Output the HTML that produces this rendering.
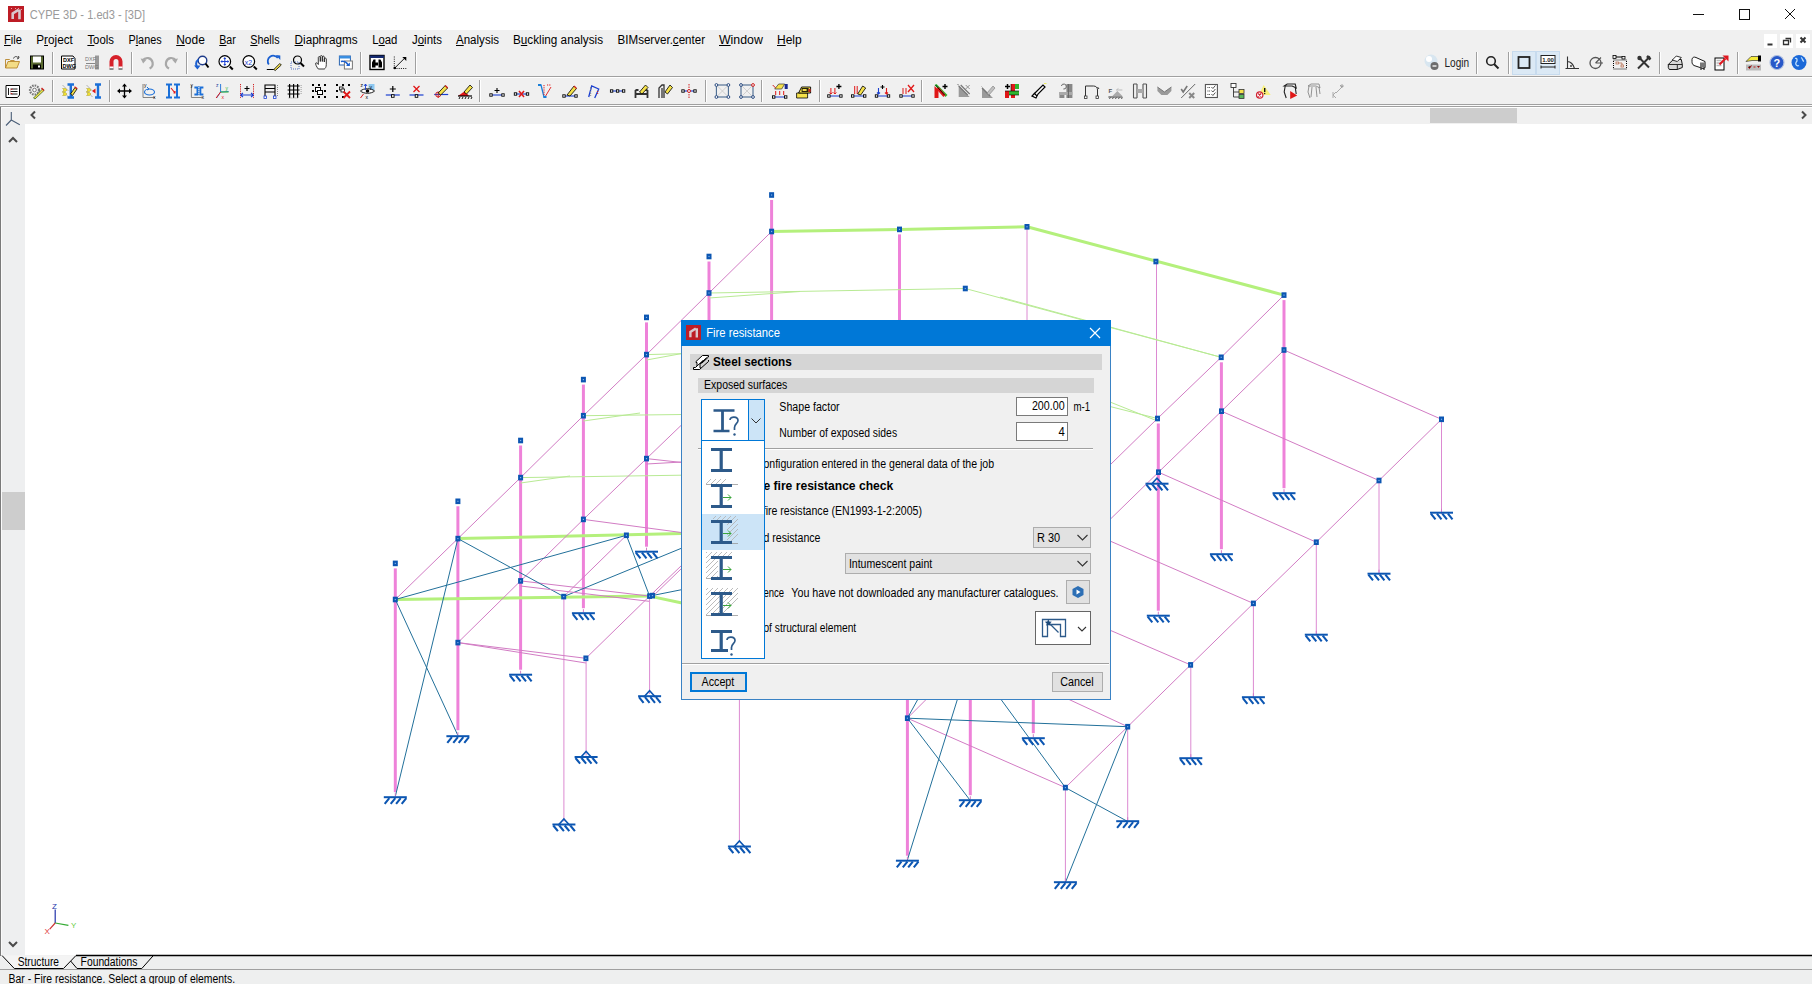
<!DOCTYPE html>
<html><head><meta charset="utf-8"><style>
*{margin:0;padding:0;box-sizing:border-box}
body{width:1812px;height:984px;overflow:hidden;background:#f0f0f0;position:relative;font-family:"Liberation Sans",sans-serif;font-size:12px;color:#000}
.a{position:absolute}
</style></head><body>
<div class="a" style="left:0;top:0;width:1812px;height:30px;background:#fff"></div>
<svg class="a" style="left:8px;top:6px" width="16" height="16"><rect width="16" height="16" fill="#bd1c25"/><path d="M4.7 13V7.5L10.5 3.8M11.5 3.5V13.3" stroke="#d9c6cc" stroke-width="2.6" fill="none"/><path d="M3 2.5h1M7 2.5h1M10 2.5h1M13 3.5h1" stroke="#e8a0a8" stroke-width="1"/></svg>
<svg class="a" style="left:1690px;top:0" width="122" height="30"><path d="M3 14.5H14" stroke="#111" stroke-width="1"/><rect x="49.5" y="9.5" width="10" height="10" stroke="#111" fill="none"/><path d="M95 9L105 19M105 9L95 19" stroke="#111" stroke-width="1"/></svg>
<div class="a" style="left:1764px;top:34px;width:13px;height:14px;background:#fff"></div>
<div class="a" style="left:1780px;top:34px;width:13px;height:14px;background:#fff"></div>
<div class="a" style="left:1796px;top:34px;width:14px;height:14px;background:#fff"></div>
<svg class="a" style="left:1763px;top:33px" width="49" height="15"><path d="M4.5 11.5H9.5" stroke="#333" stroke-width="2"/><path d="M20.5 7.5h5v4h-5zM22.5 5.5h5v4" stroke="#333" fill="none" stroke-width="1.3"/><path d="M37.5 4.5L42.5 9.5M42.5 4.5L37.5 9.5" stroke="#333" stroke-width="2"/></svg>
<div class="a" style="left:0;top:76px;width:1812px;height:1px;background:#a0a0a0"></div>
<div class="a" style="left:0;top:77px;width:1812px;height:1px;background:#fff"></div>
<div class="a" style="left:0;top:104px;width:1812px;height:1px;background:#a0a0a0"></div>
<div class="a" style="left:0;top:105px;width:1812px;height:1px;background:#fbfbfb"></div>
<div class="a" style="left:0;top:106px;width:1812px;height:1px;background:#a0a0a0"></div>
<div class="a" style="left:0;top:107px;width:1812px;height:1px;background:#fff"></div>
<svg class="a" style="left:0;top:0" width="1812" height="106" font-family="Liberation Sans"><rect x="1512.5" y="51.5" width="23" height="23" fill="#dbe9f5" stroke="#c7dbee"/><rect x="1536.5" y="51.5" width="23" height="23" fill="#dbe9f5" stroke="#c7dbee"/><circle cx="1431" cy="61" r="6.5" fill="#d8e6f0"/><circle cx="1429" cy="59" r="3" fill="#fff"/><circle cx="1434.5" cy="66" r="4" fill="#6d6d6d"/><path d="M1432.5 66H1436.5" stroke="#fff" stroke-width="1.3"/><rect x="52" y="52" width="1" height="22" fill="#a0a0a0"/><rect x="53" y="52" width="1" height="22" fill="#fff"/><rect x="131" y="52" width="1" height="22" fill="#a0a0a0"/><rect x="132" y="52" width="1" height="22" fill="#fff"/><rect x="186" y="52" width="1" height="22" fill="#a0a0a0"/><rect x="187" y="52" width="1" height="22" fill="#fff"/><rect x="360" y="52" width="1" height="22" fill="#a0a0a0"/><rect x="361" y="52" width="1" height="22" fill="#fff"/><rect x="415" y="52" width="1" height="22" fill="#a0a0a0"/><rect x="416" y="52" width="1" height="22" fill="#fff"/><rect x="1476" y="52" width="1" height="22" fill="#a0a0a0"/><rect x="1477" y="52" width="1" height="22" fill="#fff"/><rect x="1508" y="52" width="1" height="22" fill="#a0a0a0"/><rect x="1509" y="52" width="1" height="22" fill="#fff"/><rect x="1659" y="52" width="1" height="22" fill="#a0a0a0"/><rect x="1660" y="52" width="1" height="22" fill="#fff"/><rect x="1737" y="52" width="1" height="22" fill="#a0a0a0"/><rect x="1738" y="52" width="1" height="22" fill="#fff"/><rect x="52" y="80" width="1" height="22" fill="#a0a0a0"/><rect x="53" y="80" width="1" height="22" fill="#fff"/><rect x="109" y="80" width="1" height="22" fill="#a0a0a0"/><rect x="110" y="80" width="1" height="22" fill="#fff"/><rect x="479" y="80" width="1" height="22" fill="#a0a0a0"/><rect x="480" y="80" width="1" height="22" fill="#fff"/><rect x="705" y="80" width="1" height="22" fill="#a0a0a0"/><rect x="706" y="80" width="1" height="22" fill="#fff"/><rect x="761" y="80" width="1" height="22" fill="#a0a0a0"/><rect x="762" y="80" width="1" height="22" fill="#fff"/><rect x="819" y="80" width="1" height="22" fill="#a0a0a0"/><rect x="820" y="80" width="1" height="22" fill="#fff"/><rect x="921" y="80" width="1" height="22" fill="#a0a0a0"/><rect x="922" y="80" width="1" height="22" fill="#fff"/><g transform="translate(4.5,54.5)"><path d="M1 13.5L3.5 7H15L12.5 13.5Z" fill="#f3dc86" stroke="#b8862a" stroke-width="0.9"/><path d="M1 13.5V5H5L6 6H10" fill="none" stroke="#b8862a" stroke-width="0.9"/><path d="M9 4C10 1.5 12 1.5 14 3.5M12.5 4.5L14.5 3.5L14 1.5" stroke="#333" stroke-width="0.9" fill="none"/></g><g transform="translate(29,54.5)"><rect x="1.5" y="1.5" width="13" height="13" fill="#5b6b32" stroke="#000"/><rect x="4" y="2" width="8" height="6" fill="#fff"/><rect x="4" y="10" width="8" height="4.5" fill="#000"/><rect x="9" y="11" width="2" height="2" fill="#fff"/></g><g transform="translate(60,54.5)"><path d="M1.5 1.5H13L15 4V14.5H1.5Z" fill="#fff" stroke="#000"/><text x="3" y="7" font-size="5.5" font-weight="bold" font-family="Liberation Sans">DXF</text><text x="2.5" y="13" font-size="5.5" font-weight="bold" font-family="Liberation Sans">DWG</text></g><g transform="translate(84,54.5)"><rect x="11" y="1" width="4" height="14" fill="#999"/><text x="1" y="6.5" font-size="5.5" fill="#777" font-family="Liberation Sans">DXF</text><text x="1" y="14" font-size="5.5" fill="#777" font-family="Liberation Sans">DWG</text><path d="M2 9H11" stroke="#888"/></g><g transform="translate(108,54.5)"><path d="M3.5 14V7A4.5 4.5 0 0 1 12.5 7V14" stroke="#d6212a" stroke-width="4" fill="none"/><rect x="1.5" y="12" width="4" height="2.5" fill="#fff"/><rect x="10.5" y="12" width="4" height="2.5" fill="#fff"/><path d="M1.5 14.5H5.5M10.5 14.5H14.5" stroke="#222"/></g><g transform="translate(139.6,54.5)"><path d="M3 6C6 2 12 3 13 8C13.5 11 12 13 10 14" stroke="#a8a8a8" stroke-width="2.2" fill="none"/><path d="M1 4L3.5 9L7 5Z" fill="#a8a8a8"/></g><g transform="translate(163,54.5)"><path d="M13 6C10 2 4 3 3 8C2.5 11 4 13 6 14" stroke="#a8a8a8" stroke-width="2.2" fill="none"/><path d="M15 4L12.5 9L9 5Z" fill="#a8a8a8"/></g><g transform="translate(193.5,54.5)"><circle cx="9" cy="6" r="4.3" stroke="#1e3b8a" stroke-width="1.4" fill="#fff"/><path d="M12 9L15 13" stroke="#000" stroke-width="2"/><path d="M5 5C2 7 2 11 4 13" stroke="#1a5fd0" stroke-width="2" fill="none"/><path d="M0.5 11H7L4 15Z" fill="#1a5fd0"/></g><g transform="translate(217.8,54.5)"><circle cx="7" cy="7" r="5.8" stroke="#000" stroke-width="1.2" fill="#fff"/><path d="M12 12L15 15" stroke="#000" stroke-width="2"/><path d="M7 2.5L5.5 4.5H8.5ZM7 11.5L5.5 9.5H8.5ZM2.5 7L4.5 5.5V8.5ZM11.5 7L9.5 5.5V8.5Z" fill="#1a3fd0"/><path d="M7 4V10M4 7H10" stroke="#1a3fd0"/></g><g transform="translate(241.8,54.5)"><circle cx="7" cy="7" r="5.8" stroke="#000" stroke-width="1.2" fill="#fff"/><path d="M12 12L15 15" stroke="#000" stroke-width="2"/><text x="3" y="10" font-size="7" fill="#1a3fd0" font-family="Liberation Sans">x2</text></g><g transform="translate(265.8,54.5)"><path d="M3 10A5.5 5.5 0 1 1 12 3.5" stroke="#1a5fd0" stroke-width="1.8" fill="none"/><path d="M10 0.5L14.5 1V5.5Z" fill="#1a5fd0"/><path d="M8 15L14 9L15.5 10.5L9.5 16Z" fill="#f5e14a" stroke="#000" stroke-width="0.8"/><path d="M1 15H8" stroke="#000"/></g><g transform="translate(289.5,54.5)"><rect x="1.5" y="7.5" width="8" height="7" stroke="#5470c8" stroke-dasharray="1 1" fill="none"/><circle cx="8" cy="5.5" r="4" stroke="#000" stroke-width="1.2" fill="none"/><path d="M11 8.5L14.5 12" stroke="#000" stroke-width="2"/></g><g transform="translate(313.8,54.5)"><path d="M4.5 14.5C2.5 12 1.5 9.5 2 8.5C2.8 7.8 4 9 4.5 10V3C4.5 1.8 6.5 1.8 6.5 3V7V2C6.5 0.8 8.5 0.8 8.5 2V7V2.5C8.5 1.3 10.5 1.3 10.5 2.5V7.5V4.5C10.5 3.3 12.5 3.3 12.5 4.5V10C12.5 12.5 11.5 14 10.5 14.5Z" fill="#fff" stroke="#222" stroke-width="0.9"/></g><g transform="translate(337.9,54.5)"><rect x="1.5" y="1.5" width="11" height="9" fill="#fff" stroke="#2a64b0"/><rect x="1.5" y="1.5" width="11" height="2.5" fill="#3a8ee0"/><rect x="6.5" y="6.5" width="8" height="8" fill="#fff" stroke="#777"/><path d="M3 7C6 6 9 8 10.5 11" stroke="#1a5fd0" stroke-width="1.6" fill="none"/><path d="M8 11.5H12V8Z" fill="#1a5fd0"/></g><g transform="translate(369,54.5)"><rect x="1" y="1" width="14" height="14" fill="#fff" stroke="#000" stroke-width="1.4"/><rect x="1" y="1" width="14" height="2.5" fill="#152a70"/><path d="M3 13V8L4.5 5H6.5V13ZM13 13V8L11.5 5H9.5V13ZM6 8H10V11H6Z" fill="#000"/></g><g transform="translate(392.3,54.5)"><path d="M2 14H14M2 14V2" stroke="#000" stroke-width="0.9" stroke-dasharray="1 1.2"/><path d="M2 14L13 3" stroke="#000" stroke-width="0.9"/><path d="M10 2.5H14V6.5Z" fill="#000"/><circle cx="2.5" cy="13.5" r="1.3" fill="#000"/></g><g transform="translate(1484.5,54.5)"><circle cx="6.5" cy="6.5" r="4.3" stroke="#222" stroke-width="1.6" fill="none"/><path d="M9.5 9.5L14 14" stroke="#222" stroke-width="2"/></g><g transform="translate(1516,54.5)"><rect x="2.5" y="2.5" width="11" height="11" stroke="#222" stroke-width="1.8" fill="none"/></g><g transform="translate(1540,54.5)"><rect x="1" y="1" width="14" height="8" stroke="#222" stroke-width="1" fill="#fff"/><text x="2.2" y="7.6" font-size="6.2" font-weight="bold" font-family="Liberation Sans" fill="#222" textLength="11.6" lengthAdjust="spacingAndGlyphs">1.00</text><path d="M1 12.5H15M1 11V14M15 11V14" stroke="#222"/></g><g transform="translate(1564.5,54.5)"><path d="M1 14H14.5M3 2V14M3 7C6 7 9 10 10 14" stroke="#333" stroke-width="1.1" fill="none"/><circle cx="6.5" cy="11.5" r="0.9" fill="#333"/></g><g transform="translate(1588,54.5)"><circle cx="7.5" cy="8.5" r="5.5" stroke="#555" stroke-width="1.3" fill="none"/><path d="M7.5 8.5L13 3M7.5 8.5H15" stroke="#555" stroke-width="1.1"/></g><g transform="translate(1612,54.5)"><rect x="1.5" y="5.5" width="13" height="9" stroke="#000" stroke-dasharray="1 1" fill="none"/><rect x="1" y="1" width="3" height="3" stroke="#000" stroke-width="0.8" fill="none"/><rect x="10" y="2" width="3" height="2.5" stroke="#000" stroke-width="0.8" fill="none"/><path d="M4 2.5H10" stroke="#000"/><rect x="4" y="7.5" width="2.5" height="2" stroke="#b06040" stroke-width="0.7" fill="none"/><rect x="9" y="10.5" width="2.5" height="2" stroke="#b06040" stroke-width="0.7" fill="none"/><path d="M6.5 8.5H10V10.5" stroke="#b06040" stroke-width="0.7" fill="none"/></g><g transform="translate(1636,54.5)"><path d="M2 14L14 2M3 3L13 13" stroke="#333" stroke-width="2"/><circle cx="3.5" cy="3.5" r="2.2" fill="#333"/><path d="M11 1.5L14.5 5" stroke="#333" stroke-width="2.5"/></g><g transform="translate(1667.3,54.5)"><path d="M1 10L6 5H14L15 10V13L10 15H2L1 13Z" fill="#d8d8d8" stroke="#000" stroke-width="0.9"/><path d="M5 5.5L9 1.5L14 3L10 7Z" fill="#fff" stroke="#000" stroke-width="0.8"/><path d="M1 10H10L15 10M10 10V15" stroke="#000" stroke-width="0.8" fill="none"/></g><g transform="translate(1691,54.5)"><path d="M1 5C1 3 3 2 5 3L14 7V13L12 14L3 11C1.5 10 1 9 1 7Z" fill="#fff" stroke="#000" stroke-width="0.9"/><rect x="9" y="8" width="6" height="5" fill="#777"/><path d="M10 13V15.5M13 13V15.5" stroke="#000"/></g><g transform="translate(1713.5,54.5)"><rect x="1.5" y="3.5" width="9" height="12" fill="#fff" stroke="#000"/><path d="M3 6H8M3 8.5H8M3 11H8" stroke="#bbb" stroke-width="1.4"/><path d="M6 10L12 4" stroke="#e01820" stroke-width="2.2"/><path d="M9 1H15V7Z" fill="#e01820"/></g><g transform="translate(1745,54.5)"><rect x="1" y="10" width="15" height="6" fill="#bbb"/><path d="M3 12.5L4.5 14L6.5 11M8.5 12.5H10.5M12.5 11.5L13.5 13L14.5 11.5" stroke="#c02020" stroke-width="1"/><path d="M1 7L6 2H14V6H7Z" fill="#f5ea3a" stroke="#333" stroke-width="0.7"/><rect x="13" y="1" width="3" height="6" fill="#000"/></g><g transform="translate(1769,54.5)"><circle cx="8" cy="8" r="7" fill="#2858c8" stroke="#b0c0e0" stroke-width="1.2"/><text x="4.5" y="12.5" font-size="11" font-weight="bold" fill="#fff" font-family="Liberation Sans">?</text></g><g transform="translate(1791,54.5)"><circle cx="8" cy="8" r="7.5" fill="#1a68d8"/><path d="M4 4C6 3 7 6 5 8C4 10 6 12 8 11M10 3C12 4 11 6 13 7" stroke="#bfe0ff" stroke-width="1.3" fill="none"/></g><g transform="translate(4.5,83)"><path d="M1.5 2.5H15V12L13 14.5H1.5Z" fill="#fff" stroke="#000"/><path d="M4 5V12M6 6H13M6 8.5H13M6 11H13" stroke="#000" stroke-width="0.9"/><path d="M6 7L8 6M6 10L8 11" stroke="#d02020" stroke-width="0.9"/></g><g transform="translate(28.5,83)"><circle cx="6" cy="7" r="4.5" fill="none" stroke="#777" stroke-width="2.2" stroke-dasharray="1.6 1"/><circle cx="6" cy="7" r="1.8" fill="#fff" stroke="#777"/><path d="M5 15L14 6L15.5 7.5L6.5 16Z" fill="#f5e14a" stroke="#3a6a2a" stroke-width="0.8"/><path d="M13 5L15.5 7.5" stroke="#d02020" stroke-width="1.4"/></g><g transform="translate(61.5,83)"><path d="M1 2L7 8M1 8L7 14" stroke="#999" stroke-width="0.7"/><path d="M1 5.5H4L5.5 7L4 8.5H1L2.5 7Z" fill="#f0e030" stroke="#b0a020" stroke-width="0.5"/><path d="M1 9.5H4L5.5 11L4 12.5H1L2.5 11Z" fill="#f0e030" stroke="#b0a020" stroke-width="0.5"/><path d="M6 1.5H12.5M6 14.5H12.5M9.3 1.5V14.5" stroke="#1a6fd8" stroke-width="2.4"/><path d="M9 11L13.5 4.5L15.5 6L11 12.5Z" fill="#f5e14a" stroke="#000" stroke-width="0.8"/><path d="M13 3.8L15.8 5.8" stroke="#d02020" stroke-width="1.4"/></g><g transform="translate(85.5,83)"><path d="M1 2L7 8M1 8L7 14" stroke="#999" stroke-width="0.7"/><path d="M1 5.5H4L5.5 7L4 8.5H1L2.5 7Z" fill="#f0e030" stroke="#b0a020" stroke-width="0.5"/><path d="M1 9.5H4L5.5 11L4 12.5H1L2.5 11Z" fill="#f0e030" stroke="#b0a020" stroke-width="0.5"/><path d="M6.5 8L10 5.5V10.5Z" fill="#e01818"/><path d="M9.5 1.5H15.5M9.5 14.5H15.5M12.5 1.5V14.5" stroke="#1a6fd8" stroke-width="2.4"/></g><g transform="translate(116.5,83)"><path d="M8 2V14M2 8H14" stroke="#000" stroke-width="1.3"/><path d="M8 0.5L5.5 3.5H10.5ZM8 15.5L5.5 12.5H10.5ZM0.5 8L3.5 5.5V10.5ZM15.5 8L12.5 5.5V10.5Z" fill="#000"/></g><g transform="translate(141,83)"><path d="M2 1V14.5H14" stroke="#777" stroke-width="0.9" fill="none"/><ellipse cx="8.5" cy="9" rx="5" ry="3" stroke="#1a6fd8" stroke-width="1.1" fill="none"/><path d="M6 4L8 6L6 7" fill="none" stroke="#1a6fd8"/><text x="12" y="16" font-size="5" font-family="Liberation Sans">x</text><text x="3" y="4" font-size="5" font-family="Liberation Sans">y</text></g><g transform="translate(165,83)"><path d="M1 1.5H7M1 14.5H7M4 1.5V14.5M9 1.5H15M9 14.5H15M12 1.5V14.5" stroke="#1a6fd8" stroke-width="2"/><path d="M6 5L10 10M8.5 10H10V8" stroke="#e01818" stroke-width="1.1" fill="none"/></g><g transform="translate(189.4,83)"><path d="M2 2V14.5H13" stroke="#777" stroke-width="0.9" fill="none"/><path d="M5 4.5H8V11.5H5M14 4.5H11V11.5H14" stroke="#1a6fd8" stroke-width="1.8" fill="none"/><path d="M9.5 3V13" stroke="#1a6fd8" stroke-dasharray="1 1"/><text x="12" y="16" font-size="5" font-family="Liberation Sans">x</text><text x="1" y="4" font-size="5" font-family="Liberation Sans">y</text></g><g transform="translate(214.6,83)"><path d="M6 9V1M6 9L14 8.5M6 9L2 15" stroke="#1a6fd8" stroke-width="0.9"/><path d="M6 9H14" stroke="#2fb52f" stroke-width="1"/><path d="M6 9L1.5 15" stroke="#e01818" stroke-width="1"/><text x="1.5" y="4" font-size="5" fill="#1a3fa0" font-family="Liberation Sans">z</text><text x="11" y="7" font-size="5" fill="#2fb52f" font-family="Liberation Sans">y</text><text x="7" y="16" font-size="5" fill="#e01818" font-family="Liberation Sans">x</text></g><g transform="translate(239,83)"><path d="M1.5 1V15M14.5 1V15" stroke="#d02020" stroke-dasharray="1.2 1"/><path d="M1.5 12H14.5M1.5 12L4 10M1.5 12L4 14M14.5 12L12 10M14.5 12L12 14" stroke="#1a3fd0" stroke-width="1.1"/><path d="M8 3V8M5.5 5.5H10.5" stroke="#000" stroke-width="1.1"/></g><g transform="translate(263,83)"><path d="M2 14V2H12V14M2 5.5H12M2 9H12" stroke="#000" stroke-width="1.1" fill="none"/><rect x="1" y="13" width="2.5" height="2.5" fill="#fff" stroke="#1a3fd0" stroke-width="0.8"/><rect x="10.5" y="13" width="2.5" height="2.5" fill="#fff" stroke="#1a3fd0" stroke-width="0.8"/><path d="M14.5 2V13" stroke="#888" stroke-dasharray="1 1"/></g><g transform="translate(286.6,83)"><path d="M3 1V15M7 1V15M11 1V15M1 3H13M1 7H13M1 11H13" stroke="#000" stroke-width="1.2"/><path d="M14.5 2V12M2 15H12" stroke="#999" stroke-dasharray="1 1"/></g><g transform="translate(311,83)"><path d="M1 1h2v2h-2zM7 1h2v2h-2zM13 1h2v2h-2zM1 7h2v2h-2zM13 7h2v2h-2zM1 13h2v2h-2zM7 13h2v2h-2zM13 13h2v2h-2z" fill="#000"/><rect x="4.5" y="4.5" width="5" height="4" fill="#fff" stroke="#000"/><rect x="6.5" y="7.5" width="5" height="4" fill="#fff" stroke="#000"/></g><g transform="translate(335,83)"><path d="M1 1h2v2h-2zM7 1h2v2h-2zM13 1h2v2h-2zM1 7h2v2h-2zM1 13h2v2h-2zM7 13h2v2h-2z" fill="#000"/><rect x="4.5" y="4" width="3.5" height="3" fill="#fff" stroke="#000" stroke-width="0.8"/><rect x="6" y="6" width="3.5" height="3" fill="#fff" stroke="#000" stroke-width="0.8"/><path d="M8.5 8.5L15 15M15 8.5L8.5 15" stroke="#e01818" stroke-width="1.8"/></g><g transform="translate(359.5,83)"><rect x="9" y="1" width="6" height="6" fill="#8ec8f0"/><path d="M1 8C4 5 12 5 15 8C12 11 4 11 1 8Z" fill="#fff" stroke="#000" stroke-width="0.9"/><circle cx="8" cy="8" r="1.8" fill="#000"/><path d="M6 7V1M6 1L4.5 3M6 1L7.5 3" stroke="#1a3fd0" stroke-width="0.9" fill="none"/><path d="M4 11L1 15" stroke="#e01818"/><text x="10" y="6" font-size="5" font-family="Liberation Sans">y</text><text x="1" y="4" font-size="5" font-family="Liberation Sans">z</text><text x="6" y="16" font-size="5" font-family="Liberation Sans">x</text></g><g transform="translate(384.8,83)"><path d="M1 12H15" stroke="#1a3fd0" stroke-width="1.2"/><rect x="6.7" y="11.7" width="2.6" height="2.6" fill="#fff" stroke="#000" stroke-width="0.9"/><path d="M8 3V9M5 6H11" stroke="#000" stroke-width="1.2"/></g><g transform="translate(408.5,83)"><path d="M1 12H15" stroke="#1a3fd0" stroke-width="1.2"/><rect x="6.7" y="11.7" width="2.6" height="2.6" fill="#fff" stroke="#000" stroke-width="0.9"/><path d="M5 3L11 9M11 3L5 9" stroke="#e01818" stroke-width="1.3"/></g><g transform="translate(433.2,83)"><path d="M1 11.5H15" stroke="#1a3fd0" stroke-width="1.2"/><circle cx="5" cy="11.5" r="2.5" fill="none" stroke="#d02020"/><path d="M5 9V15" stroke="#d02020"/><path d="M5 10L12 2.5L14.5 5L7.5 12Z" fill="#f5e14a" stroke="#000" stroke-width="0.8"/><path d="M12 2.5L14.5 5" stroke="#d02020" stroke-width="1.2"/></g><g transform="translate(457,83)"><path d="M1 13L8 8L12 13Z" fill="#e01818"/><path d="M1 13H15" stroke="#000" stroke-width="1.2"/><path d="M2 16L3 14M5 16L6 14M8 16L9 14M11 16L12 14M14 16L15 14" stroke="#000" stroke-width="0.9"/><path d="M7 9L13 2L15.5 4.5L9.5 11Z" fill="#f5e14a" stroke="#000" stroke-width="0.8"/></g><g transform="translate(489,83)"><path d="M2 12H14" stroke="#1a3fd0" stroke-width="1.1"/><rect x="0.8" y="10.8" width="2.4" height="2.4" fill="#fff" stroke="#000" stroke-width="0.9"/><rect x="12.8" y="10.8" width="2.4" height="2.4" fill="#fff" stroke="#000" stroke-width="0.9"/><path d="M8 5V10M5.5 7.5H10.5" stroke="#000" stroke-width="1.1"/></g><g transform="translate(513.5,83)"><path d="M2 11H14" stroke="#1a3fd0" stroke-width="1.1"/><rect x="0.8" y="9.8" width="2.4" height="2.4" fill="#fff" stroke="#000" stroke-width="0.9"/><rect x="12.8" y="9.8" width="2.4" height="2.4" fill="#fff" stroke="#000" stroke-width="0.9"/><path d="M5.5 8L10.5 14M10.5 8L5.5 14" stroke="#e01818" stroke-width="1.5"/></g><g transform="translate(537,83)"><path d="M2 2H4L7 14H9" stroke="#1a7fd8" stroke-width="1.3" fill="none"/><path d="M8 14L14 4" stroke="#e01818" stroke-width="0.9"/><path d="M7 2V12M10 2H14" stroke="#e01818" stroke-dasharray="1.2 1"/><rect x="1" y="1" width="3" height="2" fill="#1a7fd8"/><rect x="6.5" y="13" width="3" height="2" fill="#1a7fd8"/></g><g transform="translate(562,83)"><path d="M2 13H14" stroke="#1a3fd0" stroke-width="1.1"/><rect x="0.8" y="11.8" width="2.4" height="2.4" fill="#fff" stroke="#000" stroke-width="0.9"/><rect x="12.8" y="11.8" width="2.4" height="2.4" fill="#fff" stroke="#000" stroke-width="0.9"/><path d="M5 12L12 3L14.5 5.5L8 13Z" fill="#f5e14a" stroke="#000" stroke-width="0.8"/><path d="M12 3L14.5 5.5" stroke="#d02020" stroke-width="1.2"/></g><g transform="translate(585.7,83)"><path d="M3 14L6 3L13 6L9 15" stroke="#1a3fd0" stroke-width="1.3" fill="none"/><path d="M5 4V14" stroke="#888" stroke-dasharray="1 1"/><path d="M12 8V12" stroke="#e01818" stroke-dasharray="1 1"/></g><g transform="translate(609.6,83)"><path d="M2 8H14" stroke="#1a3fd0" stroke-width="1.1"/><rect x="0.8" y="6.8" width="2.4" height="2.4" fill="#fff" stroke="#000" stroke-width="0.9"/><rect x="6.8" y="6.8" width="2.4" height="2.4" fill="#fff" stroke="#000" stroke-width="0.9"/><rect x="12.8" y="6.8" width="2.4" height="2.4" fill="#fff" stroke="#000" stroke-width="0.9"/></g><g transform="translate(633.5,83)"><path d="M2 15V7M14 15V7M2 11H14M2 7H5M11 7H14" stroke="#333" stroke-width="1.8" fill="none"/><path d="M6 9L12 2L14.5 4.5L8.5 11Z" fill="#f5e14a" stroke="#000" stroke-width="0.8"/></g><g transform="translate(657,83)"><path d="M2 15V5L5 2H7V15M5 15V5" stroke="#333" stroke-width="1.3" fill="none"/><path d="M8 9L13 2L15.5 4.5L10.5 11Z" fill="#f5e14a" stroke="#000" stroke-width="0.8"/></g><g transform="translate(681,83)"><path d="M1 8H15" stroke="#1a3fd0" stroke-width="1.1"/><rect x="0.8" y="6.8" width="2.4" height="2.4" fill="#fff" stroke="#000" stroke-width="0.9"/><rect x="12.8" y="6.8" width="2.4" height="2.4" fill="#fff" stroke="#000" stroke-width="0.9"/><path d="M8 1V15" stroke="#d02020" stroke-dasharray="1.5 1"/><circle cx="8" cy="8" r="1.5" fill="#fff" stroke="#d02020"/></g><g transform="translate(714.4,83)"><rect x="2" y="2" width="12" height="12" fill="none" stroke="#4a6a90" stroke-width="1.1"/><path d="M2 2L14 14M14 2L2 14" stroke="#c8c8c8" stroke-width="0.8"/><circle cx="2" cy="2" r="1.4" fill="#fff" stroke="#2a4a80"/><circle cx="14" cy="2" r="1.4" fill="#fff" stroke="#2a4a80"/><circle cx="2" cy="14" r="1.4" fill="#fff" stroke="#2a4a80"/><circle cx="14" cy="14" r="1.4" fill="#fff" stroke="#2a4a80"/></g><g transform="translate(739,83)"><rect x="2" y="2" width="12" height="12" fill="none" stroke="#4a6a90" stroke-width="1.1"/><path d="M2 2L14 14M14 2L2 14" stroke="#c8c8c8" stroke-width="0.8"/><circle cx="2" cy="2" r="1.4" fill="#fff" stroke="#2a4a80"/><circle cx="14" cy="2" r="1.4" fill="#fff" stroke="#d02020"/><circle cx="2" cy="14" r="1.4" fill="#fff" stroke="#2a4a80"/><circle cx="14" cy="14" r="1.4" fill="#fff" stroke="#2a4a80"/></g><g transform="translate(771.7,83)"><path d="M2 14H14" stroke="#1a3fd0"/><rect x="0.8" y="12.8" width="2.4" height="2.4" fill="#fff" stroke="#000" stroke-width="0.9"/><rect x="12.8" y="12.8" width="2.4" height="2.4" fill="#fff" stroke="#000" stroke-width="0.9"/><path d="M4 8V12M8 8V12M12 8V12" stroke="#e01818" stroke-width="1"/><path d="M3 6L7 1H13L10 6Z" fill="#f5e14a" stroke="#333" stroke-width="0.7"/><rect x="13" y="1" width="3" height="5" fill="#1a2a90"/><path d="M1 2L4 5" stroke="#d02020"/></g><g transform="translate(795.6,83)"><path d="M1 10H12V15H1Z" fill="#f5e14a" stroke="#000" stroke-width="0.8"/><path d="M3 10L6 4H15V10H6Z" fill="#f5e14a" stroke="#000" stroke-width="0.9"/><rect x="6" y="5" width="7" height="4" fill="#000" opacity="0.85"/><rect x="7" y="6" width="4" height="2" fill="#f5e14a"/><rect x="13" y="6" width="2" height="3" fill="#d02020"/></g><g transform="translate(826.9,83)"><path d="M2 13H14" stroke="#1a3fd0"/><rect x="0.8" y="11.8" width="2.4" height="2.4" fill="#fff" stroke="#000" stroke-width="0.9"/><rect x="12.8" y="11.8" width="2.4" height="2.4" fill="#fff" stroke="#000" stroke-width="0.9"/><path d="M4 5V11M8 5V11" stroke="#e01818" stroke-width="1"/><path d="M2.5 9.5L4 11L5.5 9.5M6.5 9.5L8 11L9.5 9.5" stroke="#e01818" fill="none"/><path d="M12 1V6M9.5 3.5H14.5" stroke="#000" stroke-width="1.3"/></g><g transform="translate(850.7,83)"><path d="M2 13H14" stroke="#1a3fd0"/><rect x="0.8" y="11.8" width="2.4" height="2.4" fill="#fff" stroke="#000" stroke-width="0.9"/><rect x="12.8" y="11.8" width="2.4" height="2.4" fill="#fff" stroke="#000" stroke-width="0.9"/><path d="M4 3V11M6.5 3V11" stroke="#e01818" stroke-width="1"/><path d="M7 11L12 3L15 5L10 12Z" fill="#f5e14a" stroke="#000" stroke-width="0.8"/></g><g transform="translate(874.5,83)"><path d="M2 13H14" stroke="#1a3fd0"/><rect x="0.8" y="11.8" width="2.4" height="2.4" fill="#fff" stroke="#000" stroke-width="0.9"/><rect x="12.8" y="11.8" width="2.4" height="2.4" fill="#fff" stroke="#000" stroke-width="0.9"/><path d="M4 5V11M2.5 9.5L4 11L5.5 9.5" stroke="#1a3fd0" fill="none" stroke-width="1.1"/><path d="M12 5V11M10.5 9.5L12 11L13.5 9.5" stroke="#e01818" fill="none" stroke-width="1.1"/><path d="M8 2V6M6 4H10" stroke="#000" stroke-width="1.1"/></g><g transform="translate(899,83)"><path d="M2 13H14" stroke="#1a3fd0"/><rect x="0.8" y="11.8" width="2.4" height="2.4" fill="#fff" stroke="#000" stroke-width="0.9"/><rect x="12.8" y="11.8" width="2.4" height="2.4" fill="#fff" stroke="#000" stroke-width="0.9"/><path d="M4 5V11M7 5V11" stroke="#e01818" stroke-width="1"/><path d="M9 2L15 9M15 2L9 9" stroke="#e01818" stroke-width="1.3"/></g><g transform="translate(932.5,83)"><path d="M2 2L13 14L15 12L4 1Z" fill="#2fb52f"/><path d="M2 3L2 15L6 15L6 7Z" fill="#e01818"/><path d="M5 5L12 13" stroke="#e01818" stroke-width="3"/><path d="M3 2L12 12" stroke="#000" stroke-width="0.8"/><path d="M12.5 1V6M10 3.5H15" stroke="#000" stroke-width="1.4"/></g><g transform="translate(955.7,83)"><path d="M1 1L14 14H3V1Z" fill="#9a9a9a"/><path d="M3 3L12 12M5 2L14 11" stroke="#777" stroke-width="1.2"/><path d="M10 2L14 6M14 2L10 6" stroke="#888" stroke-width="0.9"/></g><g transform="translate(980,83)"><path d="M1 3L13 15H2V3Z" fill="#9a9a9a"/><path d="M2 5L10 13" stroke="#777" stroke-width="1.2"/><path d="M7 10L13 3L15 5L9 12Z" fill="#c0c0c0" stroke="#888" stroke-width="0.7"/></g><g transform="translate(1004,83)"><rect x="1" y="8" width="4" height="7" fill="#e01818"/><rect x="7" y="1" width="4" height="14" fill="#e01818"/><rect x="11" y="1" width="4" height="5" fill="#2fb52f"/><rect x="5" y="8" width="10" height="4" fill="#2fb52f"/><path d="M1 8H15M7 1V8M5 12H15" stroke="#000" stroke-width="0.6"/><path d="M3.5 1V6M1 3.5H6" stroke="#000" stroke-width="1.5"/></g><g transform="translate(1031,83)"><path d="M2 12L5 9L12 2L14 4L7 11L5 15L1 13Z" fill="#fff" stroke="#000" stroke-width="1.2"/><path d="M3 10L6 13" stroke="#000" stroke-width="1.3"/><path d="M13 0.5L15.5 0.5" stroke="#ecec60"/></g><g transform="translate(1058.4,83)"><rect x="1" y="9" width="5" height="6" fill="#888"/><rect x="8" y="1" width="6" height="14" fill="#888"/><rect x="1" y="9" width="13" height="3" fill="#aaa"/><path d="M3 3A2.5 2.5 0 1 1 5 6" stroke="#666" fill="none"/><path d="M10 1V15" stroke="#666"/></g><g transform="translate(1083.5,83)"><path d="M2 14V3H10C12.5 3 14 4.5 14 7V14" stroke="#333" stroke-width="1" fill="none"/><rect x="1" y="13" width="2.5" height="2.5" fill="#fff" stroke="#333" stroke-width="0.8"/><rect x="12.5" y="13" width="2.5" height="2.5" fill="#fff" stroke="#333" stroke-width="0.8"/><path d="M14 4L15.5 6" stroke="#333"/></g><g transform="translate(1107.4,83)"><path d="M5 13L10 8L15 13Z" fill="#aaa"/><path d="M1 14H15" stroke="#333"/><path d="M2 16L3 14.5M5 16L6 14.5M8 16L9 14.5M11 16L12 14.5M14 16L15 14.5" stroke="#333" stroke-width="0.8"/><text x="1" y="10" font-size="6" font-weight="bold" fill="#555" font-family="Liberation Sans">F</text><path d="M9 7H15M9 7L11 5.5" stroke="#bbb"/></g><g transform="translate(1132,83)"><path d="M1.5 1V15M5 1V15M11 1V15M14.5 1V15M1.5 1H5M1.5 15H5M11 1H14.5M11 15H14.5" stroke="#555" stroke-width="1.1"/><rect x="5" y="6" width="6" height="4" fill="#aaa"/></g><g transform="translate(1156.4,83)"><path d="M1 4L8 9L15 4V8L11 12H5L1 8Z" fill="#9a9a9a"/><path d="M1 4L8 9L15 4" stroke="#777" fill="none"/></g><g transform="translate(1180.2,83)"><path d="M1 15L15 1" stroke="#666"/><path d="M1 6L3 9L7 3" stroke="#777" stroke-width="1.6" fill="none"/><path d="M9 10L14 15M14 10L9 15" stroke="#888" stroke-width="2"/></g><g transform="translate(1203.4,83)"><rect x="2" y="1.5" width="12" height="13" fill="#fff" stroke="#555" stroke-width="1.1"/><path d="M4 4.5H7M4 8H7M4 11.5H7" stroke="#555" stroke-dasharray="1 0.5"/><path d="M8 4L9.5 5.5L12 2.5M8 7.5L9.5 9L12 6M8 11L9.5 12.5L12 9.5" stroke="#555" fill="none"/></g><g transform="translate(1230,83)"><rect x="1" y="0.5" width="5" height="4" fill="#fff" stroke="#333" stroke-width="0.9"/><path d="M3.5 4.5V14H9M3.5 9H9" stroke="#333" fill="none" stroke-width="0.9"/><rect x="9" y="6.5" width="5" height="4" fill="#f5e14a" stroke="#333" stroke-width="0.8"/><rect x="9" y="11.5" width="5" height="4" fill="#5ab85a" stroke="#333" stroke-width="0.8"/></g><g transform="translate(1255.7,83)"><path d="M8 2L15 12H3Z" fill="#f8f07a"/><path d="M9 5V9" stroke="#111" stroke-width="1.4"/><circle cx="9" cy="10.5" r="0.7" fill="#111"/><circle cx="4" cy="12" r="3.2" fill="#fff" stroke="#d02030" stroke-width="1.2"/><path d="M2.5 10.5L5.5 13.5M5.5 10.5L2.5 13.5" stroke="#d02030" stroke-width="1.1"/></g><g transform="translate(1282.2,83)"><path d="M2 3L5 1H13L14 5L10 3H4L2 3ZM3 3L2 9L4 15M13 4L14 11" stroke="#222" stroke-width="1.1" fill="none"/><path d="M8 8L15 12.5L8 16Z" fill="#e01818"/></g><g transform="translate(1306,83)"><path d="M2 3L5 1H13L14 5L10 3H4L2 3ZM3 3L2 9L4 15M13 4L14 11M6 4L5 14M10 4L11 14" stroke="#888" stroke-width="0.9" fill="none"/></g><g transform="translate(1330,83)"><path d="M3 15V9M3 12L6 9M3 12L6 15M6 10L13 3" stroke="#aaa" stroke-width="1"/><path d="M10 2L12 4M12 1V5M14 3H10" stroke="#999" stroke-width="0.8"/></g></svg>
<div class="a" style="left:1430px;top:108px;width:87px;height:15px;background:#cdcdcd"></div>
<svg class="a" style="left:28px;top:110px" width="10" height="10"><path d="M7 1.5L3.5 5L7 8.5" stroke="#4a4a4a" stroke-width="2" fill="none"/></svg>
<svg class="a" style="left:1799px;top:110px" width="10" height="10"><path d="M3 1.5L6.5 5L3 8.5" stroke="#4a4a4a" stroke-width="2" fill="none"/></svg>
<div class="a" style="left:0;top:107px;width:1px;height:849px;background:#7a7a7a"></div>
<div class="a" style="left:1px;top:107px;width:1px;height:849px;background:#fafafa"></div>
<div class="a" style="left:2px;top:124px;width:23px;height:831px;background:#eeeff0"></div>
<div class="a" style="left:2px;top:492px;width:23px;height:38px;background:#cdcdcd"></div>
<svg class="a" style="left:0;top:108px" width="24" height="20"><path d="M11.3 4V12M11.3 12L6 17.5M11.3 12L19.8 16.7" stroke="#4a5e78" stroke-width="1.1" fill="none"/></svg>
<svg class="a" style="left:7px;top:134px" width="12" height="10"><path d="M2 8L6 4L10 8" stroke="#4a4a4a" stroke-width="2" fill="none"/></svg>
<svg class="a" style="left:7px;top:940px" width="12" height="10"><path d="M2 2L6 6L10 2" stroke="#4a4a4a" stroke-width="2" fill="none"/></svg>
<div class="a" style="left:25px;top:124px;width:1787px;height:831px;background:#fff"></div>
<svg class="a" style="left:0;top:0" width="1812" height="984">
<line x1="771.6" y1="200" x2="771.6" y2="320" stroke="#ee82d9" stroke-width="3"/>
<line x1="899.5" y1="234.4" x2="899.5" y2="320" stroke="#ee82d9" stroke-width="3"/>
<line x1="709" y1="261.5" x2="709" y2="320" stroke="#ee82d9" stroke-width="3"/>
<line x1="646.5" y1="322.4" x2="646.5" y2="546.7" stroke="#ee82d9" stroke-width="3"/>
<line x1="583.4" y1="384.6" x2="583.4" y2="608.2" stroke="#ee82d9" stroke-width="3"/>
<line x1="520.6" y1="445.5" x2="520.6" y2="669.7" stroke="#ee82d9" stroke-width="3"/>
<line x1="457.9" y1="506.3" x2="457.9" y2="730.2" stroke="#ee82d9" stroke-width="3"/>
<line x1="395.3" y1="568.4" x2="395.3" y2="792.2" stroke="#ee82d9" stroke-width="3"/>
<line x1="1284" y1="300.1" x2="1284" y2="488.2" stroke="#ee82d9" stroke-width="3"/>
<line x1="1221.4" y1="362.3" x2="1221.4" y2="549.2" stroke="#ee82d9" stroke-width="3"/>
<line x1="1158.3" y1="423.5" x2="1158.3" y2="610.7" stroke="#ee82d9" stroke-width="3"/>
<line x1="907.4" y1="699" x2="907.4" y2="855.7" stroke="#ee82d9" stroke-width="3"/>
<line x1="970.3" y1="699" x2="970.3" y2="795.2" stroke="#ee82d9" stroke-width="3"/>
<line x1="1033.3" y1="699" x2="1033.3" y2="733.2" stroke="#ee82d9" stroke-width="3"/>
<line x1="1027" y1="226.8" x2="1027" y2="320" stroke="#dc8ad2" stroke-width="1"/>
<line x1="1156.5" y1="261.5" x2="1156.5" y2="418.5" stroke="#dc8ad2" stroke-width="1"/>
<line x1="1441.5" y1="419.3" x2="1441.5" y2="514" stroke="#dc8ad2" stroke-width="1"/>
<line x1="1379" y1="480.5" x2="1379" y2="575" stroke="#dc8ad2" stroke-width="1"/>
<line x1="1316.3" y1="542.2" x2="1316.3" y2="636" stroke="#dc8ad2" stroke-width="1"/>
<line x1="1253.4" y1="603.4" x2="1253.4" y2="698.5" stroke="#dc8ad2" stroke-width="1"/>
<line x1="1190.8" y1="664.9" x2="1190.8" y2="759.5" stroke="#dc8ad2" stroke-width="1"/>
<line x1="1127.7" y1="726.7" x2="1127.7" y2="821.5" stroke="#dc8ad2" stroke-width="1"/>
<line x1="1065.4" y1="787.6" x2="1065.4" y2="882.5" stroke="#dc8ad2" stroke-width="1"/>
<line x1="739.4" y1="699" x2="739.4" y2="842" stroke="#dc8ad2" stroke-width="1"/>
<line x1="563.9" y1="596.6" x2="563.9" y2="821.5" stroke="#dc8ad2" stroke-width="1"/>
<line x1="586.1" y1="658.3" x2="586.1" y2="755.5" stroke="#dc8ad2" stroke-width="1"/>
<line x1="649.6" y1="596.1" x2="649.6" y2="694" stroke="#dc8ad2" stroke-width="1"/>
<line x1="771.6" y1="231.5" x2="899.5" y2="229.4" stroke="#b4f07c" stroke-width="3"/>
<line x1="899.5" y1="229.4" x2="1027" y2="226.8" stroke="#b4f07c" stroke-width="3"/>
<line x1="1027" y1="226.8" x2="1284" y2="295.1" stroke="#b4f07c" stroke-width="3"/>
<line x1="395.3" y1="599.5" x2="649.6" y2="596.1" stroke="#b4f07c" stroke-width="3"/>
<line x1="649.6" y1="596.1" x2="682" y2="603" stroke="#b4f07c" stroke-width="3"/>
<line x1="457.9" y1="538.6" x2="682" y2="533.5" stroke="#b4f07c" stroke-width="3"/>
<line x1="709" y1="293" x2="965.3" y2="288.5" stroke="#b8ea94" stroke-width="1"/>
<line x1="709" y1="298" x2="800" y2="291.5" stroke="#b8ea94" stroke-width="1"/>
<line x1="965.3" y1="288.5" x2="1221.2" y2="357.3" stroke="#b8ea94" stroke-width="1"/>
<line x1="1000" y1="297" x2="1221.2" y2="357.3" stroke="#b8ea94" stroke-width="1"/>
<line x1="1110" y1="406.5" x2="1157.5" y2="418.5" stroke="#b8ea94" stroke-width="1"/>
<line x1="1110" y1="402" x2="1157.5" y2="421" stroke="#b8ea94" stroke-width="1"/>
<line x1="646.5" y1="354.6" x2="682" y2="353.7" stroke="#b8ea94" stroke-width="1"/>
<line x1="646.5" y1="360" x2="682" y2="353.5" stroke="#b8ea94" stroke-width="1"/>
<line x1="583.4" y1="415.7" x2="682" y2="414.5" stroke="#b8ea94" stroke-width="1"/>
<line x1="583.4" y1="421" x2="640" y2="413" stroke="#b8ea94" stroke-width="1"/>
<line x1="520.6" y1="477.6" x2="682" y2="475.2" stroke="#b8ea94" stroke-width="1"/>
<line x1="520.6" y1="483" x2="570" y2="476" stroke="#b8ea94" stroke-width="1"/>
<line x1="395.3" y1="599.5" x2="457.9" y2="538.6" stroke="#d27cc4" stroke-width="1"/>
<line x1="457.9" y1="538.6" x2="520.6" y2="477.6" stroke="#d27cc4" stroke-width="1"/>
<line x1="520.6" y1="477.6" x2="583.4" y2="415.7" stroke="#d27cc4" stroke-width="1"/>
<line x1="583.4" y1="415.7" x2="646.5" y2="354.6" stroke="#d27cc4" stroke-width="1"/>
<line x1="646.5" y1="354.6" x2="709" y2="293" stroke="#d27cc4" stroke-width="1"/>
<line x1="709" y1="293" x2="771.6" y2="231.5" stroke="#d27cc4" stroke-width="1"/>
<line x1="457.9" y1="642.6" x2="520.6" y2="580.9" stroke="#d27cc4" stroke-width="1"/>
<line x1="520.6" y1="580.9" x2="583.4" y2="519.4" stroke="#d27cc4" stroke-width="1"/>
<line x1="583.4" y1="519.4" x2="646.5" y2="458.6" stroke="#d27cc4" stroke-width="1"/>
<line x1="646.5" y1="458.6" x2="682" y2="424.5" stroke="#d27cc4" stroke-width="1"/>
<line x1="585.9" y1="658.3" x2="649.6" y2="596.1" stroke="#d27cc4" stroke-width="1"/>
<line x1="649.6" y1="596.1" x2="682" y2="565" stroke="#d27cc4" stroke-width="1"/>
<line x1="651" y1="598" x2="682" y2="568" stroke="#d27cc4" stroke-width="1"/>
<line x1="563.7" y1="596.6" x2="626.4" y2="535.3" stroke="#d27cc4" stroke-width="1"/>
<line x1="1065.4" y1="787.6" x2="1127.7" y2="726.7" stroke="#d27cc4" stroke-width="1"/>
<line x1="1127.7" y1="726.7" x2="1190.6" y2="664.9" stroke="#d27cc4" stroke-width="1"/>
<line x1="1190.6" y1="664.9" x2="1253.4" y2="603.4" stroke="#d27cc4" stroke-width="1"/>
<line x1="1253.4" y1="603.4" x2="1316.3" y2="542.2" stroke="#d27cc4" stroke-width="1"/>
<line x1="1316.3" y1="542.2" x2="1379" y2="480.5" stroke="#d27cc4" stroke-width="1"/>
<line x1="1379" y1="480.5" x2="1441.5" y2="419.3" stroke="#d27cc4" stroke-width="1"/>
<line x1="1110" y1="465" x2="1157.5" y2="418.5" stroke="#d27cc4" stroke-width="1"/>
<line x1="1157.5" y1="418.5" x2="1221.2" y2="357.3" stroke="#d27cc4" stroke-width="1"/>
<line x1="1221.2" y1="357.3" x2="1284" y2="295.1" stroke="#d27cc4" stroke-width="1"/>
<line x1="1110" y1="519.5" x2="1158.5" y2="472.2" stroke="#d27cc4" stroke-width="1"/>
<line x1="1158.5" y1="472.2" x2="1221.5" y2="411.2" stroke="#d27cc4" stroke-width="1"/>
<line x1="1221.5" y1="411.2" x2="1284" y2="350" stroke="#d27cc4" stroke-width="1"/>
<line x1="1284" y1="350" x2="1441.5" y2="419.3" stroke="#d27cc4" stroke-width="1"/>
<line x1="1221.5" y1="411.2" x2="1379" y2="480.5" stroke="#d27cc4" stroke-width="1"/>
<line x1="1158.5" y1="472.2" x2="1316.3" y2="542.2" stroke="#d27cc4" stroke-width="1"/>
<line x1="1110" y1="541" x2="1253.4" y2="603.4" stroke="#d27cc4" stroke-width="1"/>
<line x1="1110" y1="630.2" x2="1190.6" y2="664.9" stroke="#d27cc4" stroke-width="1"/>
<line x1="1068" y1="699" x2="1127.7" y2="726.7" stroke="#d27cc4" stroke-width="1"/>
<line x1="907.4" y1="718.2" x2="1065.4" y2="787.6" stroke="#d27cc4" stroke-width="1"/>
<line x1="907.4" y1="718.2" x2="926.6" y2="699" stroke="#d27cc4" stroke-width="1"/>
<line x1="457.9" y1="642.6" x2="585.9" y2="658.3" stroke="#d27cc4" stroke-width="1"/>
<line x1="520.6" y1="580.9" x2="649.6" y2="596.1" stroke="#d27cc4" stroke-width="1"/>
<line x1="583.4" y1="519.4" x2="682" y2="532.6" stroke="#d27cc4" stroke-width="1"/>
<line x1="646.5" y1="458.6" x2="682" y2="462.5" stroke="#d27cc4" stroke-width="1"/>
<line x1="646.5" y1="464" x2="682" y2="462" stroke="#d27cc4" stroke-width="1"/>
<line x1="395.3" y1="599.5" x2="626.4" y2="535.3" stroke="#22709a" stroke-width="1"/>
<line x1="457.9" y1="538.6" x2="563.7" y2="596.6" stroke="#22709a" stroke-width="1"/>
<line x1="626.4" y1="535.3" x2="649.6" y2="596.1" stroke="#22709a" stroke-width="1"/>
<line x1="907.4" y1="718.2" x2="1127.7" y2="726.7" stroke="#22709a" stroke-width="1"/>
<line x1="1065.4" y1="787.6" x2="1127.7" y2="821.5" stroke="#22709a" stroke-width="1"/>
<line x1="563.7" y1="596.6" x2="682" y2="548" stroke="#22709a" stroke-width="1"/>
<line x1="649.6" y1="596.1" x2="682" y2="589.6" stroke="#22709a" stroke-width="1"/>
<line x1="457.9" y1="538.6" x2="395.3" y2="796.5" stroke="#22709a" stroke-width="1"/>
<line x1="395.3" y1="599.5" x2="457.9" y2="735.5" stroke="#22709a" stroke-width="1"/>
<line x1="907.4" y1="718.2" x2="970.3" y2="800.5" stroke="#22709a" stroke-width="1"/>
<line x1="907.4" y1="860" x2="957.5" y2="699" stroke="#22709a" stroke-width="1"/>
<line x1="907.4" y1="718.2" x2="918" y2="699" stroke="#22709a" stroke-width="1"/>
<line x1="1000.7" y1="699" x2="1065.4" y2="787.6" stroke="#22709a" stroke-width="1"/>
<line x1="1127.7" y1="726.7" x2="1065.4" y2="882.5" stroke="#22709a" stroke-width="1"/>
<line x1="457.9" y1="642.6" x2="585.9" y2="663" stroke="#d27cc4" stroke-width="1"/>
<line x1="520.6" y1="586" x2="649" y2="601.3" stroke="#d27cc4" stroke-width="1"/>
<line x1="646.5" y1="547.7" x2="646.5" y2="550.7" stroke="#d27cc4" stroke-width="1"/>
<g transform="translate(646.5,550.7)" stroke="#0c56b2" fill="none"><path d="M-11.5 1H11.5" stroke-width="2"/><path d="M-10.6 2L-6 7.6M-4.6 2L0 7.6M0.8 2L5.4 7.6M6.4 2L11 7.6" stroke-width="2.1"/></g>
<line x1="583.4" y1="609.2" x2="583.4" y2="612.2" stroke="#d27cc4" stroke-width="1"/>
<g transform="translate(583.4,612.2)" stroke="#0c56b2" fill="none"><path d="M-11.5 1H11.5" stroke-width="2"/><path d="M-10.6 2L-6 7.6M-4.6 2L0 7.6M0.8 2L5.4 7.6M6.4 2L11 7.6" stroke-width="2.1"/></g>
<line x1="520.6" y1="670.7" x2="520.6" y2="673.7" stroke="#d27cc4" stroke-width="1"/>
<g transform="translate(520.6,673.7)" stroke="#0c56b2" fill="none"><path d="M-11.5 1H11.5" stroke-width="2"/><path d="M-10.6 2L-6 7.6M-4.6 2L0 7.6M0.8 2L5.4 7.6M6.4 2L11 7.6" stroke-width="2.1"/></g>
<line x1="457.9" y1="732.2" x2="457.9" y2="735.2" stroke="#d27cc4" stroke-width="1"/>
<g transform="translate(457.9,735.2)" stroke="#0c56b2" fill="none"><path d="M-11.5 1H11.5" stroke-width="2"/><path d="M-6 2L-10.6 7.6M0 2L-4.6 7.6M5.4 2L0.8 7.6M11 2L6.4 7.6" stroke-width="2.1"/></g>
<line x1="395.3" y1="793.2" x2="395.3" y2="796.2" stroke="#d27cc4" stroke-width="1"/>
<g transform="translate(395.3,796.2)" stroke="#0c56b2" fill="none"><path d="M-11.5 1H11.5" stroke-width="2"/><path d="M-6 2L-10.6 7.6M0 2L-4.6 7.6M5.4 2L0.8 7.6M11 2L6.4 7.6" stroke-width="2.1"/></g>
<line x1="1284" y1="489.2" x2="1284" y2="492.2" stroke="#d27cc4" stroke-width="1"/>
<g transform="translate(1284,492.2)" stroke="#0c56b2" fill="none"><path d="M-11.5 1H11.5" stroke-width="2"/><path d="M-10.6 2L-6 7.6M-4.6 2L0 7.6M0.8 2L5.4 7.6M6.4 2L11 7.6" stroke-width="2.1"/></g>
<line x1="1221.4" y1="550.2" x2="1221.4" y2="553.2" stroke="#d27cc4" stroke-width="1"/>
<g transform="translate(1221.4,553.2)" stroke="#0c56b2" fill="none"><path d="M-11.5 1H11.5" stroke-width="2"/><path d="M-10.6 2L-6 7.6M-4.6 2L0 7.6M0.8 2L5.4 7.6M6.4 2L11 7.6" stroke-width="2.1"/></g>
<line x1="1158.3" y1="611.7" x2="1158.3" y2="614.7" stroke="#d27cc4" stroke-width="1"/>
<g transform="translate(1158.3,614.7)" stroke="#0c56b2" fill="none"><path d="M-11.5 1H11.5" stroke-width="2"/><path d="M-10.6 2L-6 7.6M-4.6 2L0 7.6M0.8 2L5.4 7.6M6.4 2L11 7.6" stroke-width="2.1"/></g>
<line x1="907.4" y1="856.7" x2="907.4" y2="859.7" stroke="#d27cc4" stroke-width="1"/>
<g transform="translate(907.4,859.7)" stroke="#0c56b2" fill="none"><path d="M-11.5 1H11.5" stroke-width="2"/><path d="M-6 2L-10.6 7.6M0 2L-4.6 7.6M5.4 2L0.8 7.6M11 2L6.4 7.6" stroke-width="2.1"/></g>
<line x1="970.3" y1="796.2" x2="970.3" y2="799.2" stroke="#d27cc4" stroke-width="1"/>
<g transform="translate(970.3,799.2)" stroke="#0c56b2" fill="none"><path d="M-11.5 1H11.5" stroke-width="2"/><path d="M-6 2L-10.6 7.6M0 2L-4.6 7.6M5.4 2L0.8 7.6M11 2L6.4 7.6" stroke-width="2.1"/></g>
<line x1="1033.3" y1="734.2" x2="1033.3" y2="737.2" stroke="#d27cc4" stroke-width="1"/>
<g transform="translate(1033.3,737.2)" stroke="#0c56b2" fill="none"><path d="M-11.5 1H11.5" stroke-width="2"/><path d="M-10.6 2L-6 7.6M-4.6 2L0 7.6M0.8 2L5.4 7.6M6.4 2L11 7.6" stroke-width="2.1"/></g>
<line x1="1441.5" y1="508.7" x2="1441.5" y2="511.7" stroke="#d27cc4" stroke-width="1"/>
<g transform="translate(1441.5,511.7)" stroke="#0c56b2" fill="none"><path d="M-11.5 1H11.5" stroke-width="2"/><path d="M-10.6 2L-6 7.6M-4.6 2L0 7.6M0.8 2L5.4 7.6M6.4 2L11 7.6" stroke-width="2.1"/></g>
<line x1="1379" y1="569.7" x2="1379" y2="572.7" stroke="#d27cc4" stroke-width="1"/>
<g transform="translate(1379,572.7)" stroke="#0c56b2" fill="none"><path d="M-11.5 1H11.5" stroke-width="2"/><path d="M-10.6 2L-6 7.6M-4.6 2L0 7.6M0.8 2L5.4 7.6M6.4 2L11 7.6" stroke-width="2.1"/></g>
<line x1="1316.3" y1="630.7" x2="1316.3" y2="633.7" stroke="#d27cc4" stroke-width="1"/>
<g transform="translate(1316.3,633.7)" stroke="#0c56b2" fill="none"><path d="M-11.5 1H11.5" stroke-width="2"/><path d="M-10.6 2L-6 7.6M-4.6 2L0 7.6M0.8 2L5.4 7.6M6.4 2L11 7.6" stroke-width="2.1"/></g>
<line x1="1253.4" y1="693.2" x2="1253.4" y2="696.2" stroke="#d27cc4" stroke-width="1"/>
<g transform="translate(1253.4,696.2)" stroke="#0c56b2" fill="none"><path d="M-11.5 1H11.5" stroke-width="2"/><path d="M-10.6 2L-6 7.6M-4.6 2L0 7.6M0.8 2L5.4 7.6M6.4 2L11 7.6" stroke-width="2.1"/></g>
<line x1="1190.8" y1="754.2" x2="1190.8" y2="757.2" stroke="#d27cc4" stroke-width="1"/>
<g transform="translate(1190.8,757.2)" stroke="#0c56b2" fill="none"><path d="M-11.5 1H11.5" stroke-width="2"/><path d="M-10.6 2L-6 7.6M-4.6 2L0 7.6M0.8 2L5.4 7.6M6.4 2L11 7.6" stroke-width="2.1"/></g>
<line x1="1127.7" y1="817.2" x2="1127.7" y2="820.2" stroke="#d27cc4" stroke-width="1"/>
<g transform="translate(1127.7,820.2)" stroke="#0c56b2" fill="none"><path d="M-11.5 1H11.5" stroke-width="2"/><path d="M-6 2L-10.6 7.6M0 2L-4.6 7.6M5.4 2L0.8 7.6M11 2L6.4 7.6" stroke-width="2.1"/></g>
<line x1="1065.4" y1="878.2" x2="1065.4" y2="881.2" stroke="#d27cc4" stroke-width="1"/>
<g transform="translate(1065.4,881.2)" stroke="#0c56b2" fill="none"><path d="M-11.5 1H11.5" stroke-width="2"/><path d="M-6 2L-10.6 7.6M0 2L-4.6 7.6M5.4 2L0.8 7.6M11 2L6.4 7.6" stroke-width="2.1"/></g>
<g transform="translate(563.9,823.5)" stroke="#0c56b2" fill="none"><path d="M-6 2L0 -4.5L6 2" stroke-width="1.6"/><path d="M-11.5 1H11.5" stroke-width="2"/><path d="M-10.6 2L-6 7.6M-4.6 2L0 7.6M0.8 2L5.4 7.6M6.4 2L11 7.6" stroke-width="2.1"/></g>
<g transform="translate(586.1,756)" stroke="#0c56b2" fill="none"><path d="M-6 2L0 -4.5L6 2" stroke-width="1.6"/><path d="M-11.5 1H11.5" stroke-width="2"/><path d="M-10.6 2L-6 7.6M-4.6 2L0 7.6M0.8 2L5.4 7.6M6.4 2L11 7.6" stroke-width="2.1"/></g>
<g transform="translate(649.6,695.2)" stroke="#0c56b2" fill="none"><path d="M-6 2L0 -4.5L6 2" stroke-width="1.6"/><path d="M-11.5 1H11.5" stroke-width="2"/><path d="M-10.6 2L-6 7.6M-4.6 2L0 7.6M0.8 2L5.4 7.6M6.4 2L11 7.6" stroke-width="2.1"/></g>
<g transform="translate(739.4,845.5)" stroke="#0c56b2" fill="none"><path d="M-6 2L0 -4.5L6 2" stroke-width="1.6"/><path d="M-11.5 1H11.5" stroke-width="2"/><path d="M-10.6 2L-6 7.6M-4.6 2L0 7.6M0.8 2L5.4 7.6M6.4 2L11 7.6" stroke-width="2.1"/></g>
<g transform="translate(1157,482.7)" stroke="#0c56b2" fill="none"><path d="M-6 2L0 -4.5L6 2" stroke-width="1.6"/><path d="M-11.5 1H11.5" stroke-width="2"/><path d="M-10.6 2L-6 7.6M-4.6 2L0 7.6M0.8 2L5.4 7.6M6.4 2L11 7.6" stroke-width="2.1"/></g>
<rect x="769.1" y="192.2" width="5" height="5.6" fill="#0c56b2"/><rect x="771.0" y="194.4" width="1.2" height="1.2" fill="#7fb0e8"/>
<rect x="769.1" y="228.7" width="5" height="5.6" fill="#0c56b2"/><rect x="771.0" y="230.9" width="1.2" height="1.2" fill="#7fb0e8"/>
<rect x="897.0" y="226.6" width="5" height="5.6" fill="#0c56b2"/><rect x="898.9" y="228.8" width="1.2" height="1.2" fill="#7fb0e8"/>
<rect x="1024.5" y="224.0" width="5" height="5.6" fill="#0c56b2"/><rect x="1026.4" y="226.20000000000002" width="1.2" height="1.2" fill="#7fb0e8"/>
<rect x="1153.4" y="258.7" width="5" height="5.6" fill="#0c56b2"/><rect x="1155.3000000000002" y="260.9" width="1.2" height="1.2" fill="#7fb0e8"/>
<rect x="1281.5" y="292.3" width="5" height="5.6" fill="#0c56b2"/><rect x="1283.4" y="294.5" width="1.2" height="1.2" fill="#7fb0e8"/>
<rect x="706.5" y="253.7" width="5" height="5.6" fill="#0c56b2"/><rect x="708.4" y="255.9" width="1.2" height="1.2" fill="#7fb0e8"/>
<rect x="706.5" y="290.2" width="5" height="5.6" fill="#0c56b2"/><rect x="708.4" y="292.4" width="1.2" height="1.2" fill="#7fb0e8"/>
<rect x="962.8" y="285.7" width="5" height="5.6" fill="#0c56b2"/><rect x="964.6999999999999" y="287.9" width="1.2" height="1.2" fill="#7fb0e8"/>
<rect x="644.0" y="314.59999999999997" width="5" height="5.6" fill="#0c56b2"/><rect x="645.9" y="316.79999999999995" width="1.2" height="1.2" fill="#7fb0e8"/>
<rect x="644.0" y="351.8" width="5" height="5.6" fill="#0c56b2"/><rect x="645.9" y="354.0" width="1.2" height="1.2" fill="#7fb0e8"/>
<rect x="580.9" y="376.8" width="5" height="5.6" fill="#0c56b2"/><rect x="582.8" y="379.0" width="1.2" height="1.2" fill="#7fb0e8"/>
<rect x="580.9" y="412.9" width="5" height="5.6" fill="#0c56b2"/><rect x="582.8" y="415.09999999999997" width="1.2" height="1.2" fill="#7fb0e8"/>
<rect x="518.1" y="437.7" width="5" height="5.6" fill="#0c56b2"/><rect x="520.0" y="439.9" width="1.2" height="1.2" fill="#7fb0e8"/>
<rect x="518.1" y="474.8" width="5" height="5.6" fill="#0c56b2"/><rect x="520.0" y="477.0" width="1.2" height="1.2" fill="#7fb0e8"/>
<rect x="455.4" y="498.5" width="5" height="5.6" fill="#0c56b2"/><rect x="457.29999999999995" y="500.7" width="1.2" height="1.2" fill="#7fb0e8"/>
<rect x="455.4" y="535.8000000000001" width="5" height="5.6" fill="#0c56b2"/><rect x="457.29999999999995" y="538.0" width="1.2" height="1.2" fill="#7fb0e8"/>
<rect x="392.8" y="560.6" width="5" height="5.6" fill="#0c56b2"/><rect x="394.7" y="562.8" width="1.2" height="1.2" fill="#7fb0e8"/>
<rect x="392.8" y="596.7" width="5" height="5.6" fill="#0c56b2"/><rect x="394.7" y="598.9" width="1.2" height="1.2" fill="#7fb0e8"/>
<rect x="644.0" y="455.8" width="5" height="5.6" fill="#0c56b2"/><rect x="645.9" y="458.0" width="1.2" height="1.2" fill="#7fb0e8"/>
<rect x="580.9" y="516.6" width="5" height="5.6" fill="#0c56b2"/><rect x="582.8" y="518.8" width="1.2" height="1.2" fill="#7fb0e8"/>
<rect x="518.1" y="578.1" width="5" height="5.6" fill="#0c56b2"/><rect x="520.0" y="580.3" width="1.2" height="1.2" fill="#7fb0e8"/>
<rect x="455.4" y="639.8000000000001" width="5" height="5.6" fill="#0c56b2"/><rect x="457.29999999999995" y="642.0" width="1.2" height="1.2" fill="#7fb0e8"/>
<rect x="561.2" y="593.8000000000001" width="5" height="5.6" fill="#0c56b2"/><rect x="563.1" y="596.0" width="1.2" height="1.2" fill="#7fb0e8"/>
<rect x="623.9" y="532.5" width="5" height="5.6" fill="#0c56b2"/><rect x="625.8" y="534.6999999999999" width="1.2" height="1.2" fill="#7fb0e8"/>
<rect x="647.1" y="593.3000000000001" width="5" height="5.6" fill="#0c56b2"/><rect x="649.0" y="595.5" width="1.2" height="1.2" fill="#7fb0e8"/>
<rect x="583.4" y="655.5" width="5" height="5.6" fill="#0c56b2"/><rect x="585.3" y="657.6999999999999" width="1.2" height="1.2" fill="#7fb0e8"/>
<rect x="1218.7" y="354.5" width="5" height="5.6" fill="#0c56b2"/><rect x="1220.6000000000001" y="356.7" width="1.2" height="1.2" fill="#7fb0e8"/>
<rect x="1281.5" y="347.2" width="5" height="5.6" fill="#0c56b2"/><rect x="1283.4" y="349.4" width="1.2" height="1.2" fill="#7fb0e8"/>
<rect x="1155.0" y="415.7" width="5" height="5.6" fill="#0c56b2"/><rect x="1156.9" y="417.9" width="1.2" height="1.2" fill="#7fb0e8"/>
<rect x="1219.0" y="408.4" width="5" height="5.6" fill="#0c56b2"/><rect x="1220.9" y="410.59999999999997" width="1.2" height="1.2" fill="#7fb0e8"/>
<rect x="1156.0" y="469.4" width="5" height="5.6" fill="#0c56b2"/><rect x="1157.9" y="471.59999999999997" width="1.2" height="1.2" fill="#7fb0e8"/>
<rect x="1439.0" y="416.5" width="5" height="5.6" fill="#0c56b2"/><rect x="1440.9" y="418.7" width="1.2" height="1.2" fill="#7fb0e8"/>
<rect x="1376.5" y="477.7" width="5" height="5.6" fill="#0c56b2"/><rect x="1378.4" y="479.9" width="1.2" height="1.2" fill="#7fb0e8"/>
<rect x="1313.8" y="539.4000000000001" width="5" height="5.6" fill="#0c56b2"/><rect x="1315.7" y="541.6" width="1.2" height="1.2" fill="#7fb0e8"/>
<rect x="1250.9" y="600.6" width="5" height="5.6" fill="#0c56b2"/><rect x="1252.8000000000002" y="602.8" width="1.2" height="1.2" fill="#7fb0e8"/>
<rect x="1188.1" y="662.1" width="5" height="5.6" fill="#0c56b2"/><rect x="1190.0" y="664.3" width="1.2" height="1.2" fill="#7fb0e8"/>
<rect x="1125.2" y="723.9000000000001" width="5" height="5.6" fill="#0c56b2"/><rect x="1127.1000000000001" y="726.1" width="1.2" height="1.2" fill="#7fb0e8"/>
<rect x="1062.9" y="784.8000000000001" width="5" height="5.6" fill="#0c56b2"/><rect x="1064.8000000000002" y="787.0" width="1.2" height="1.2" fill="#7fb0e8"/>
<rect x="904.9" y="715.4000000000001" width="5" height="5.6" fill="#0c56b2"/><rect x="906.8" y="717.6" width="1.2" height="1.2" fill="#7fb0e8"/>
<rect x="650.0" y="592.8000000000001" width="5" height="5.6" fill="#0c56b2"/><rect x="651.9" y="595.0" width="1.2" height="1.2" fill="#7fb0e8"/>
</svg>
<svg class="a" style="left:40px;top:900px" width="40" height="40" font-family="Liberation Sans">
<path d="M15.2 9.5V23" stroke="#2233aa" stroke-width="1.2"/>
<path d="M15.2 23L28.4 25.4" stroke="#33aa33" stroke-width="1.2"/>
<path d="M15.2 23L9.7 29.2" stroke="#cc3333" stroke-width="1.2"/>
<text x="12" y="8.5" font-size="8" fill="#2233aa">Z</text>
<text x="31" y="28" font-size="8" fill="#66cc44">Y</text>
<text x="4.5" y="34" font-size="8" fill="#dd3333">X</text>
</svg>
<div class="a" style="left:0;top:956px;width:1812px;height:13px;background:#eeefef"></div>
<svg class="a" style="left:0;top:950px" width="1812" height="22">
<path d="M76 5.5H1812" stroke="#000" stroke-width="1.6"/>
<path d="M2 5.5L14.3 18.5H63.5L76 5.5" stroke="#000" stroke-width="1" fill="#f4f4f4"/>
<path d="M70.6 11L77 18.5H141.8L153.4 5.5" stroke="#000" stroke-width="1" fill="none"/>
<path d="M0 19.5H1812" stroke="#a0a0a0" stroke-width="1"/>
</svg>
<div class="a" style="left:0;top:970px;width:1812px;height:14px;background:#eeefef"></div>
<svg class="a" style="left:0px;top:0px" width="1812" height="984" font-family="Liberation Sans, sans-serif"><text x="29.8" y="19" font-size="12" font-weight="normal" fill="#9a9a9a" textLength="115.3" lengthAdjust="spacingAndGlyphs" >CYPE 3D - 1.ed3 - [3D]</text><text x="4" y="44" font-size="12" font-weight="normal" fill="#000" textLength="18" lengthAdjust="spacingAndGlyphs" >File</text><text x="36.3" y="44" font-size="12" font-weight="normal" fill="#000" textLength="36.5" lengthAdjust="spacingAndGlyphs" >Project</text><text x="87.4" y="44" font-size="12" font-weight="normal" fill="#000" textLength="26.5" lengthAdjust="spacingAndGlyphs" >Tools</text><text x="128.5" y="44" font-size="12" font-weight="normal" fill="#000" textLength="33.099999999999994" lengthAdjust="spacingAndGlyphs" >Planes</text><text x="176.2" y="44" font-size="12" font-weight="normal" fill="#000" textLength="28.600000000000023" lengthAdjust="spacingAndGlyphs" >Node</text><text x="219.3" y="44" font-size="12" font-weight="normal" fill="#000" textLength="16.5" lengthAdjust="spacingAndGlyphs" >Bar</text><text x="250.3" y="44" font-size="12" font-weight="normal" fill="#000" textLength="29.19999999999999" lengthAdjust="spacingAndGlyphs" >Shells</text><text x="294.6" y="44" font-size="12" font-weight="normal" fill="#000" textLength="63.0" lengthAdjust="spacingAndGlyphs" >Diaphragms</text><text x="372.2" y="44" font-size="12" font-weight="normal" fill="#000" textLength="25.19999999999999" lengthAdjust="spacingAndGlyphs" >Load</text><text x="412" y="44" font-size="12" font-weight="normal" fill="#000" textLength="29.899999999999977" lengthAdjust="spacingAndGlyphs" >Joints</text><text x="456" y="44" font-size="12" font-weight="normal" fill="#000" textLength="43" lengthAdjust="spacingAndGlyphs" >Analysis</text><text x="513" y="44" font-size="12" font-weight="normal" fill="#000" textLength="90" lengthAdjust="spacingAndGlyphs" >Buckling analysis</text><text x="617.6" y="44" font-size="12" font-weight="normal" fill="#000" textLength="87.39999999999998" lengthAdjust="spacingAndGlyphs" >BIMserver.center</text><text x="719" y="44" font-size="12" font-weight="normal" fill="#000" textLength="43.799999999999955" lengthAdjust="spacingAndGlyphs" >Window</text><text x="777" y="44" font-size="12" font-weight="normal" fill="#000" textLength="24.700000000000045" lengthAdjust="spacingAndGlyphs" >Help</text><text x="1444.5" y="66.5" font-size="12" font-weight="normal" fill="#222" textLength="24.6" lengthAdjust="spacingAndGlyphs" >Login</text><text x="17.7" y="965.7" font-size="12" font-weight="normal" fill="#000" textLength="41.3" lengthAdjust="spacingAndGlyphs" >Structure</text><text x="80.6" y="965.7" font-size="12" font-weight="normal" fill="#000" textLength="56.8" lengthAdjust="spacingAndGlyphs" >Foundations</text><text x="8.6" y="983.2" font-size="12" font-weight="normal" fill="#000" textLength="226.5" lengthAdjust="spacingAndGlyphs" >Bar - Fire resistance. Select a group of elements.</text><rect x="4.0" y="45" width="6.8" height="1" fill="#000"/><rect x="44.1" y="45" width="3.9" height="1" fill="#000"/><rect x="87.4" y="45" width="6.9" height="1" fill="#000"/><rect x="135.7" y="45" width="2.4" height="1" fill="#000"/><rect x="176.2" y="45" width="8.6" height="1" fill="#000"/><rect x="219.3" y="45" width="7.1" height="1" fill="#000"/><rect x="250.3" y="45" width="7.2" height="1" fill="#000"/><rect x="294.6" y="45" width="8.4" height="1" fill="#000"/><rect x="378.5" y="45" width="6.3" height="1" fill="#000"/><rect x="417.7" y="45" width="6.4" height="1" fill="#000"/><rect x="456.0" y="45" width="7.7" height="1" fill="#000"/><rect x="520.8" y="45" width="6.5" height="1" fill="#000"/><rect x="672.9" y="45" width="5.8" height="1" fill="#000"/><rect x="719.0" y="45" width="11.6" height="1" fill="#000"/><rect x="777.0" y="45" width="8.7" height="1" fill="#000"/></svg>
<!-- dialog -->
<div class="a" style="left:681px;top:320px;width:430px;height:380px;background:#f0f0f0;border:1px solid #3a82c4"></div>
<div class="a" style="left:681px;top:320px;width:430px;height:26px;background:#0078d7"></div>
<svg class="a" style="left:686px;top:325px" width="15" height="15"><rect width="15" height="15" fill="#bd1c25"/><path d="M4.4 12.2V7L9.8 3.6M10.8 3.3V12.5" stroke="#d9c6cc" stroke-width="2.4" fill="none"/></svg>
<svg class="a" style="left:1089px;top:327px" width="12" height="12"><path d="M1 1L11 11M11 1L1 11" stroke="#fff" stroke-width="1.2"/></svg>
<!-- steel sections band -->
<div class="a" style="left:690px;top:354px;width:412px;height:16px;background:#d5d5d5"></div>
<svg class="a" style="left:692px;top:354px" width="18" height="17"><path d="M1.5 15.5H7.5L9 14H8V10L9 9H10L16.5 3V1.5H10.5L4 7.5V8.5H5V12L3.5 13.5H1.5Z" fill="#fff" stroke="#000" stroke-width="1"/><path d="M7.5 15.5L16.5 7.5V6M8 10L14 4.5M9 9L15.5 3M5 12L11 6.5" stroke="#000" stroke-width="1" fill="none"/></svg>
<!-- exposed surfaces band -->
<div class="a" style="left:698px;top:378px;width:396px;height:15px;background:#d5d5d5"></div>
<div class="a" style="left:1016px;top:397px;width:52px;height:19px;background:#fff;border:1px solid #7a7a7a"></div>
<div class="a" style="left:1016px;top:422px;width:52px;height:19px;background:#fff;border:1px solid #7a7a7a"></div>
<div class="a" style="left:698px;top:448px;width:395px;height:1px;background:#a0a0a0"></div>
<div class="a" style="left:698px;top:449px;width:395px;height:1px;background:#fff"></div>
<div class="a" style="left:1033px;top:527px;width:58px;height:21px;background:#e1e1e1;border:1px solid #adadad"></div>
<svg class="a" style="left:1077px;top:534px" width="11" height="7"><path d="M0.5 1L5.5 6L10.5 1" stroke="#333" stroke-width="1.1" fill="none"/></svg>
<div class="a" style="left:845px;top:553px;width:246px;height:21px;background:#e1e1e1;border:1px solid #adadad"></div>
<svg class="a" style="left:1077px;top:560px" width="11" height="7"><path d="M0.5 1L5.5 6L10.5 1" stroke="#333" stroke-width="1.1" fill="none"/></svg>
<div class="a" style="left:1066px;top:580px;width:24px;height:24px;background:#e1e1e1;border:1px solid #adadad"></div>
<svg class="a" style="left:1070px;top:584px" width="16" height="16"><path d="M8 2L13.5 5V11L8 14L2.5 11V5Z" fill="#2d6fb5"/><path d="M6.5 5.5V10.5L10.5 8Z" fill="#fff"/></svg>
<div class="a" style="left:1035px;top:611px;width:56px;height:34px;background:#fff;border:1px solid #666"></div>
<svg class="a" style="left:1035px;top:611px" width="56" height="34"><path d="M7.5 25.5V8.5H30.5V25.5H25.5V13.5H12.5V25.5Z" stroke="#2d5a8a" stroke-width="1.3" fill="none"/><path d="M14 12L23.5 21.5" stroke="#2d5a8a" stroke-width="1.3"/><path d="M13.3 8.3L14.3 10.6L16.8 10.8L14.9 12.4L15.5 14.8L13.3 13.5L11.1 14.8L11.7 12.4L9.8 10.8L12.3 10.6Z" fill="#1d4a7a"/><path d="M43 16L47 20L51 16" stroke="#333" stroke-width="1.1" fill="none"/></svg>
<div class="a" style="left:682px;top:663px;width:427px;height:1px;background:#a0a0a0"></div>
<div class="a" style="left:682px;top:664px;width:427px;height:1px;background:#fff"></div>
<div class="a" style="left:690px;top:672px;width:57px;height:20px;background:#e1e1e1;border:2px solid #0078d7"></div>
<div class="a" style="left:1052px;top:672px;width:51px;height:20px;background:#e1e1e1;border:1px solid #adadad"></div>
<svg class="a" style="left:0px;top:0px" width="1812" height="984" font-family="Liberation Sans, sans-serif"><text x="706.2" y="337" font-size="12" font-weight="normal" fill="#fff" textLength="73.8" lengthAdjust="spacingAndGlyphs" >Fire resistance</text><text x="712.9" y="366" font-size="12" font-weight="bold" fill="#000" textLength="78.9" lengthAdjust="spacingAndGlyphs" >Steel sections</text><text x="704.1" y="389" font-size="12" font-weight="normal" fill="#000" textLength="83.2" lengthAdjust="spacingAndGlyphs" >Exposed surfaces</text><text x="779.3" y="411" font-size="12" font-weight="normal" fill="#000" textLength="60.3" lengthAdjust="spacingAndGlyphs" >Shape factor</text><text x="779.3" y="437" font-size="12" font-weight="normal" fill="#000" textLength="117.8" lengthAdjust="spacingAndGlyphs" >Number of exposed sides</text><text x="1031.9" y="410" font-size="12" font-weight="normal" fill="#000" textLength="32.7" lengthAdjust="spacingAndGlyphs" >200.00</text><text x="1058.5" y="436" font-size="12" font-weight="normal" fill="#000" textLength="6.3" lengthAdjust="spacingAndGlyphs" >4</text><text x="1073.5" y="411" font-size="12" font-weight="normal" fill="#000" textLength="16.6" lengthAdjust="spacingAndGlyphs" >m-1</text><text x="763.4" y="468" font-size="12" font-weight="normal" fill="#000" textLength="230.7" lengthAdjust="spacingAndGlyphs" >onfiguration entered in the general data of the job</text><text x="763.4" y="490" font-size="12" font-weight="bold" fill="#000" textLength="129.9" lengthAdjust="spacingAndGlyphs" >e fire resistance check</text><text x="762.7" y="515" font-size="12" font-weight="normal" fill="#000" textLength="159.3" lengthAdjust="spacingAndGlyphs" >fire resistance (EN1993-1-2:2005)</text><text x="763.4" y="542" font-size="12" font-weight="normal" fill="#000" textLength="57.1" lengthAdjust="spacingAndGlyphs" >d resistance</text><text x="1037" y="542" font-size="12" font-weight="normal" fill="#000" textLength="23.2" lengthAdjust="spacingAndGlyphs" >R 30</text><text x="848.9" y="568" font-size="12" font-weight="normal" fill="#000" textLength="83.3" lengthAdjust="spacingAndGlyphs" >Intumescent paint</text><text x="763.4" y="596.8" font-size="12" font-weight="normal" fill="#000" textLength="20.6" lengthAdjust="spacingAndGlyphs" >ence</text><text x="791.3" y="596.8" font-size="12" font-weight="normal" fill="#000" textLength="267.2" lengthAdjust="spacingAndGlyphs" >You have not downloaded any manufacturer catalogues.</text><text x="763.4" y="632" font-size="12" font-weight="normal" fill="#000" textLength="92.8" lengthAdjust="spacingAndGlyphs" >of structural element</text><text x="701.5" y="685.7" font-size="12" font-weight="normal" fill="#000" textLength="32.8" lengthAdjust="spacingAndGlyphs" >Accept</text><text x="1060.2" y="685.7" font-size="12" font-weight="normal" fill="#000" textLength="33.5" lengthAdjust="spacingAndGlyphs" >Cancel</text></svg>
<!-- combo -->
<div class="a" style="left:701px;top:399px;width:64px;height:42px;background:#fff;border:1px solid #0078d7"></div>
<div class="a" style="left:748px;top:400px;width:16px;height:40px;background:#cce4f7;border-left:1px solid #0078d7"></div>
<svg class="a" style="left:751px;top:418px" width="10" height="6"><path d="M0.5 0.5L5 5L9.5 0.5" stroke="#333" fill="none"/></svg>
<svg class="a" style="left:712px;top:405px" width="30" height="32"><path d="M1.5 5.5H22.5M1.5 26H17.5" stroke="#2d5a8a" stroke-width="2.6"/><path d="M10.5 5.5V26" stroke="#2d5a8a" stroke-width="2.8"/><path d="M18 15C18 11 26 11 26 15.5C26 18.5 22.5 19 22.5 22.5V25" stroke="#2d5a8a" stroke-width="1.7" fill="none"/><circle cx="22.5" cy="29.5" r="1.2" fill="#2d5a8a"/></svg>
<!-- dropdown list -->
<div class="a" style="left:701px;top:441px;width:64px;height:218px;background:#fff;border:1px solid #0078d7;border-top:none"></div>
<div class="a" style="left:702px;top:514px;width:62px;height:36px;background:#cce4f7"></div>
<svg class="a" style="left:701px;top:441px" width="64" height="218"><path d="M10 8.5H31M10 29.5H31" stroke="#2d5a8a" stroke-width="2.8"/><path d="M20.2 8.5V29.5" stroke="#2d5a8a" stroke-width="3.2"/><clipPath id="c2"><rect x="5" y="38" width="32" height="5"/></clipPath><path clip-path="url(#c2)" d="M-75 43L-70 38M-70 43L-65 38M-65 43L-60 38M-60 43L-55 38M-55 43L-50 38M-50 43L-45 38M-45 43L-40 38M-40 43L-35 38M-35 43L-30 38M-30 43L-25 38M-25 43L-20 38M-20 43L-15 38M-15 43L-10 38M-10 43L-5 38M-5 43L0 38M0 43L5 38M5 43L10 38M10 43L15 38M15 43L20 38M20 43L25 38" stroke="#b4b4b4" stroke-width="0.9"/><path d="M5 43.5H37" stroke="#999" stroke-width="0.8"/><path d="M10 44.5H31M10 65.5H31" stroke="#2d5a8a" stroke-width="2.8"/><path d="M20.2 44.5V65.5" stroke="#2d5a8a" stroke-width="3.2"/><path d="M22 56.5H30M27 53.5L30 56.5L27 59.5" stroke="#3aa53a" stroke-width="1" fill="none"/><clipPath id="c3"><path d="M12 75H37V103H26V80H12Z"/></clipPath><path clip-path="url(#c3)" d="M-68 103L-40 75M-63 103L-35 75M-58 103L-30 75M-53 103L-25 75M-48 103L-20 75M-43 103L-15 75M-38 103L-10 75M-33 103L-5 75M-28 103L0 75M-23 103L5 75M-18 103L10 75M-13 103L15 75M-8 103L20 75M-3 103L25 75M2 103L30 75M7 103L35 75M12 103L40 75M17 103L45 75M22 103L50 75M27 103L55 75" stroke="#b4b4b4" stroke-width="0.9"/><path d="M27 102.5H37" stroke="#999" stroke-width="0.8"/><path d="M10 80.5H31M10 101.5H31" stroke="#2d5a8a" stroke-width="2.8"/><path d="M20.2 80.5V101.5" stroke="#2d5a8a" stroke-width="3.2"/><path d="M22 92.5H30M27 89.5L30 92.5L27 95.5" stroke="#3aa53a" stroke-width="1" fill="none"/><clipPath id="c4"><path d="M5 111H32V115H17V137H5Z"/></clipPath><path clip-path="url(#c4)" d="M-75 137L-49 111M-70 137L-44 111M-65 137L-39 111M-60 137L-34 111M-55 137L-29 111M-50 137L-24 111M-45 137L-19 111M-40 137L-14 111M-35 137L-9 111M-30 137L-4 111M-25 137L1 111M-20 137L6 111M-15 137L11 111M-10 137L16 111M-5 137L21 111M0 137L26 111M5 137L31 111M10 137L36 111M15 137L41 111M20 137L46 111" stroke="#b4b4b4" stroke-width="0.9"/><path d="M5 137.5H17" stroke="#999" stroke-width="0.8"/><path d="M10 116.5H31M10 137.5H31" stroke="#2d5a8a" stroke-width="2.8"/><path d="M20.2 116.5V137.5" stroke="#2d5a8a" stroke-width="3.2"/><path d="M22 128.5H30M27 125.5L30 128.5L27 131.5" stroke="#3aa53a" stroke-width="1" fill="none"/><clipPath id="c5"><rect x="5" y="147" width="32" height="27"/></clipPath><path clip-path="url(#c5)" d="M-75 174L-48 147M-70 174L-43 147M-65 174L-38 147M-60 174L-33 147M-55 174L-28 147M-50 174L-23 147M-45 174L-18 147M-40 174L-13 147M-35 174L-8 147M-30 174L-3 147M-25 174L2 147M-20 174L7 147M-15 174L12 147M-10 174L17 147M-5 174L22 147M0 174L27 147M5 174L32 147M10 174L37 147M15 174L42 147M20 174L47 147" stroke="#b4b4b4" stroke-width="0.9"/><path d="M5 174.5H37" stroke="#999" stroke-width="0.8"/><path d="M10 152.5H31M10 173.5H31" stroke="#2d5a8a" stroke-width="2.8"/><path d="M20.2 152.5V173.5" stroke="#2d5a8a" stroke-width="3.2"/><path d="M22 164.5H30M27 161.5L30 164.5L27 167.5" stroke="#3aa53a" stroke-width="1" fill="none"/><path d="M10 190.5H31M10 209.5H27" stroke="#2d5a8a" stroke-width="2.8"/><path d="M20.2 190.5V209.5" stroke="#2d5a8a" stroke-width="3.2"/><path d="M26 199C26 195 34 195 34 199.5C34 202.5 30.5 203 30.5 206.5V209" stroke="#2d5a8a" stroke-width="1.7" fill="none"/><circle cx="30.5" cy="213.5" r="1.2" fill="#2d5a8a"/></svg>

</body></html>
